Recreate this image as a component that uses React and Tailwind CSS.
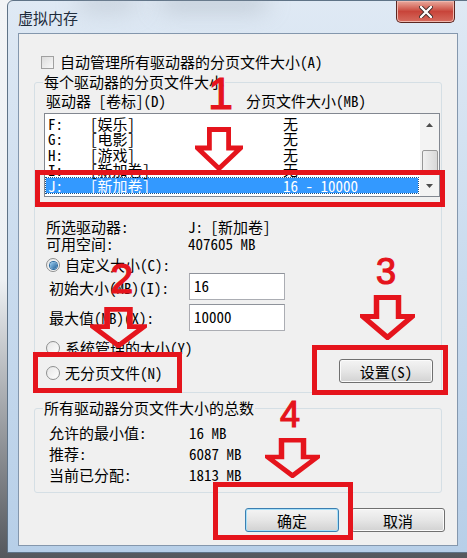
import React from "react";

const drives = [
  { letter: "F:", label: "[娱乐]", size: "无" },
  { letter: "G:", label: "[电影]", size: "无" },
  { letter: "H:", label: "[游戏]", size: "无" },
  { letter: "I:", label: "[新加卷]", size: "无" },
];

function Arrow({ className }) {
  return (
    <svg viewBox="0 0 50 44" preserveAspectRatio="none" className={className}>
      <path
        d="M15 2.5 H35 V21 H47.5 L25 41.5 L2.5 21 H15 Z"
        fill="none"
        stroke="#e5141c"
        strokeWidth="5"
      />
    </svg>
  );
}

function Radio({ checked }) {
  return (
    <span className="relative flex h-[14px] w-[14px] shrink-0 items-center justify-center rounded-full border border-[#8e8f8f] bg-gradient-to-br from-[#e6e6e6] to-[#ffffff]">
      {checked && (
        <span className="h-[7px] w-[7px] rounded-full bg-gradient-to-br from-[#9fd3f5] to-[#1f5f95] ring-1 ring-[#2a6aa0]" />
      )}
    </span>
  );
}

function Button({ children, primary, className = "" }) {
  return (
    <div
      className={
        "flex h-[24px] w-[94px] items-center justify-center rounded-[3px] border bg-gradient-to-b from-[#f4f4f4] via-[#e6e6e6] to-[#d2d2d2] text-[15px] leading-none text-black " +
        (primary
          ? "border-[#3c7fb1] shadow-[inset_0_0_0_1px_#a6e0f9] "
          : "border-[#707070] shadow-[inset_0_0_0_1px_#fbfbfb] ") +
        className
      }
    >
      {children}
    </div>
  );
}

export default function App() {
  return (
    <div className="relative h-[558px] w-[467px] overflow-hidden bg-gradient-to-b from-[#f2f4f6] via-[#eef1f4] to-[#55585d] font-['Noto_Sans_Mono_CJK_SC','Noto_Sans_CJK_SC',sans-serif] text-[15px] text-black">
      {/* window */}
      <div className="relative ml-[7px] h-[553px] w-[470px] rounded-t-[6px] border border-[#5f7387] bg-gradient-to-b from-[#dfe9f4] via-[#c9dbee] to-[#b7cfe8] pl-[10px]">
        {/* blurred glass blotches */}
        <div className="absolute left-[70px] top-[-6px] h-[14px] w-[60px] rounded-full bg-[#9aa3ad] opacity-50 blur-md" />
        <div className="absolute left-[150px] top-[-6px] h-[14px] w-[110px] rounded-full bg-[#8e98a3] opacity-50 blur-md" />

        {/* title bar */}
        <div className="flex h-[32px] items-center justify-between">
          <span className="pt-[3px] font-['Noto_Sans_CJK_SC',sans-serif] text-[15px] text-[#1c2a3a]">
            虚拟内存
          </span>
          <div className="mr-[21px] -mt-[10px] flex h-[22px] w-[59px] items-center justify-center rounded-b-[5px] border border-t-0 border-[#5b2620] bg-gradient-to-b from-[#e8a99e] via-[#c8443a] to-[#d66b5e] shadow-[inset_0_0_0_1px_#f0b8ae]">
            <svg viewBox="0 0 14 12" className="h-[12px] w-[14px]">
              <path
                d="M2 1 L12 11 M12 1 L2 11"
                stroke="#3a2a28"
                strokeWidth="4"
                strokeLinecap="round"
              />
              <path
                d="M2 1 L12 11 M12 1 L2 11"
                stroke="#ffffff"
                strokeWidth="2.4"
                strokeLinecap="round"
              />
            </svg>
          </div>
        </div>

        {/* client area */}
        <div className="h-[513px] w-[440px] border border-[#8497ad] bg-[#f0f0f0] px-[15px]">
          {/* auto manage */}
          <div className="mt-[20px] flex h-[16px] items-center">
            <span className="ml-[7px] h-[13px] w-[13px] border border-[#a0a0a0] bg-gradient-to-br from-[#dcdcdc] to-[#f8f8f8]" />
            <span className="ml-[6px] leading-[16px]">自动管理所有驱动器的分页文件大小(A)</span>
          </div>

          {/* group 1 */}
          <div className="mt-[12px] rounded-[3px] border border-[#d5dfe5]">
            <div className="-mt-[10px] ml-[8px] w-fit bg-[#f0f0f0] px-[1px] leading-[17px]">
              每个驱动器的分页文件大小
            </div>
            <div className="mt-[3px] flex h-[15px] leading-[15px]">
              <span className="ml-[11px] w-[200px]">驱动器 [卷标](D)</span>
              <span>分页文件大小(MB)</span>
            </div>

            {/* list */}
            <div className="ml-[9px] mr-[1px] mt-[5px] flex h-[84px] border border-[#828790] bg-white">
              <div className="flex-1 pt-[1.5px] leading-[15.5px]">
                {drives.map((d) => (
                  <div key={d.letter} className="flex h-[15.5px] pl-[3px]">
                    <span className="w-[42px]">{d.letter}</span>
                    <span className="w-[193px]">{d.label}</span>
                    <span>{d.size}</span>
                  </div>
                ))}
                <div className="ml-[1px] mr-[2px] flex h-[15.5px] bg-[#3399ff] pl-[2px] text-white outline-1 outline-dotted outline-[#1a4f85]">
                  <span className="w-[42px]">J:</span>
                  <span className="w-[193px]">[新加卷]</span>
                  <span>16 - 10000</span>
                </div>
              </div>
              {/* scrollbar */}
              <div className="flex w-[19px] flex-col items-center bg-[#f3f3f3]">
                <div className="flex h-[22px] w-full items-center justify-center">
                  <svg viewBox="0 0 7 4" className="h-[4px] w-[7px]">
                    <path d="M0 4 L3.5 0 L7 4 Z" fill="#4d4d4d" />
                  </svg>
                </div>
                <div className="mt-[14px] h-[24px] w-[16px] rounded-[2px] border border-[#979797] bg-gradient-to-r from-[#f1f1f1] to-[#d8d8d8]" />
                <div className="mt-[3px] flex h-[18px] w-full items-center justify-center">
                  <svg viewBox="0 0 7 4" className="h-[4px] w-[7px]">
                    <path d="M0 0 L7 0 L3.5 4 Z" fill="#4d4d4d" />
                  </svg>
                </div>
              </div>
            </div>

            {/* selected drive */}
            <div className="ml-[11px] mt-[21px] leading-[17px]">
              <div className="flex">
                <span className="w-[142px]">所选驱动器:</span>
                <span>J: [新加卷]</span>
              </div>
              <div className="flex">
                <span className="w-[142px]">可用空间:</span>
                <span>407605 MB</span>
              </div>
            </div>

            <div className="ml-[11px] mt-[5px] flex h-[16px] items-center">
              <Radio checked />
              <span className="ml-[5px] leading-[16px]">自定义大小(C):</span>
            </div>

            <div className="ml-[14px] flex h-[27px] items-center">
              <span className="w-[140px] pt-[3px]">初始大小(MB)(I):</span>
              <div className="flex h-[27px] w-[96px] items-center border border-[#abadb3] border-t-[#8f939b] bg-white pl-[4px]">
                16
              </div>
            </div>
            <div className="ml-[14px] mt-[4px] flex h-[27px] items-center">
              <span className="w-[140px] pt-[2px]">最大值(MB)(X):</span>
              <div className="flex h-[27px] w-[96px] items-center border border-[#abadb3] border-t-[#8f939b] bg-white pl-[4px]">
                10000
              </div>
            </div>

            <div className="ml-[11px] mt-[9px] flex h-[16px] items-center">
              <Radio />
              <span className="ml-[5px] leading-[16px]">系统管理的大小(Y)</span>
            </div>

            <div className="mt-[3px] flex h-[24px] items-center justify-between">
              <div className="ml-[11px] flex items-center pt-[4px]">
                <Radio />
                <span className="ml-[5px] leading-[16px]">无分页文件(N)</span>
              </div>
              <Button className="mr-[8px]">设置(S)</Button>
            </div>
            <div className="h-[9px]" />
          </div>

          {/* group 2 */}
          <div className="mt-[15px] rounded-[3px] border border-[#d5dfe5]">
            <div className="-mt-[10px] ml-[8px] w-fit bg-[#f0f0f0] px-[1px] leading-[17px]">
              所有驱动器分页文件大小的总数
            </div>
            <div className="ml-[14px] mt-[6px] leading-[21px]">
              <div className="flex">
                <span className="w-[140px]">允许的最小值:</span>
                <span>16 MB</span>
              </div>
              <div className="flex">
                <span className="w-[140px]">推荐:</span>
                <span>6087 MB</span>
              </div>
              <div className="flex">
                <span className="w-[140px]">当前已分配:</span>
                <span>1813 MB</span>
              </div>
            </div>
            <div className="h-[7px]" />
          </div>

          {/* buttons */}
          <div className="-mr-[3px] mt-[15px] flex justify-end gap-[12px]">
            <Button primary>确定</Button>
            <Button>取消</Button>
          </div>
        </div>
      </div>

      {/* red annotations */}
      <div className="absolute left-[35px] top-[170px] h-[37px] w-[410px] border-[5px] border-[#e5141c]" />
      <div className="absolute left-[33px] top-[352px] h-[41px] w-[149px] border-[5px] border-[#e5141c]" />
      <div className="absolute left-[312px] top-[345px] h-[50px] w-[136px] border-[5px] border-[#e5141c]" />
      <div className="absolute left-[213px] top-[482px] h-[58px] w-[140px] border-[5px] border-[#e5141c]" />

      <Arrow className="absolute left-[195px] top-[127px] h-[44px] w-[48px]" />
      <Arrow className="absolute left-[90px] top-[307px] h-[41px] w-[57px]" />
      <Arrow className="absolute left-[360px] top-[295px] h-[45px] w-[55px]" />
      <Arrow className="absolute left-[265px] top-[438px] h-[40px] w-[55px]" />

      <span className="absolute left-[208px] top-[71px] font-['Liberation_Sans',sans-serif] text-[45px] leading-none text-[#e5141c] [-webkit-text-stroke:1.2px_#e5141c]">
        1
      </span>
      <span className="absolute left-[110px] top-[258px] font-['Liberation_Sans',sans-serif] text-[42px] leading-none text-[#e5141c] [-webkit-text-stroke:1.2px_#e5141c]">
        2
      </span>
      <span className="absolute left-[376px] top-[254px] font-['Liberation_Sans',sans-serif] text-[36px] leading-none text-[#e5141c] [-webkit-text-stroke:1.2px_#e5141c]">
        3
      </span>
      <span className="absolute left-[280px] top-[397px] font-['Liberation_Sans',sans-serif] text-[36px] leading-none text-[#e5141c] [-webkit-text-stroke:1.2px_#e5141c]">
        4
      </span>
    </div>
  );
}
